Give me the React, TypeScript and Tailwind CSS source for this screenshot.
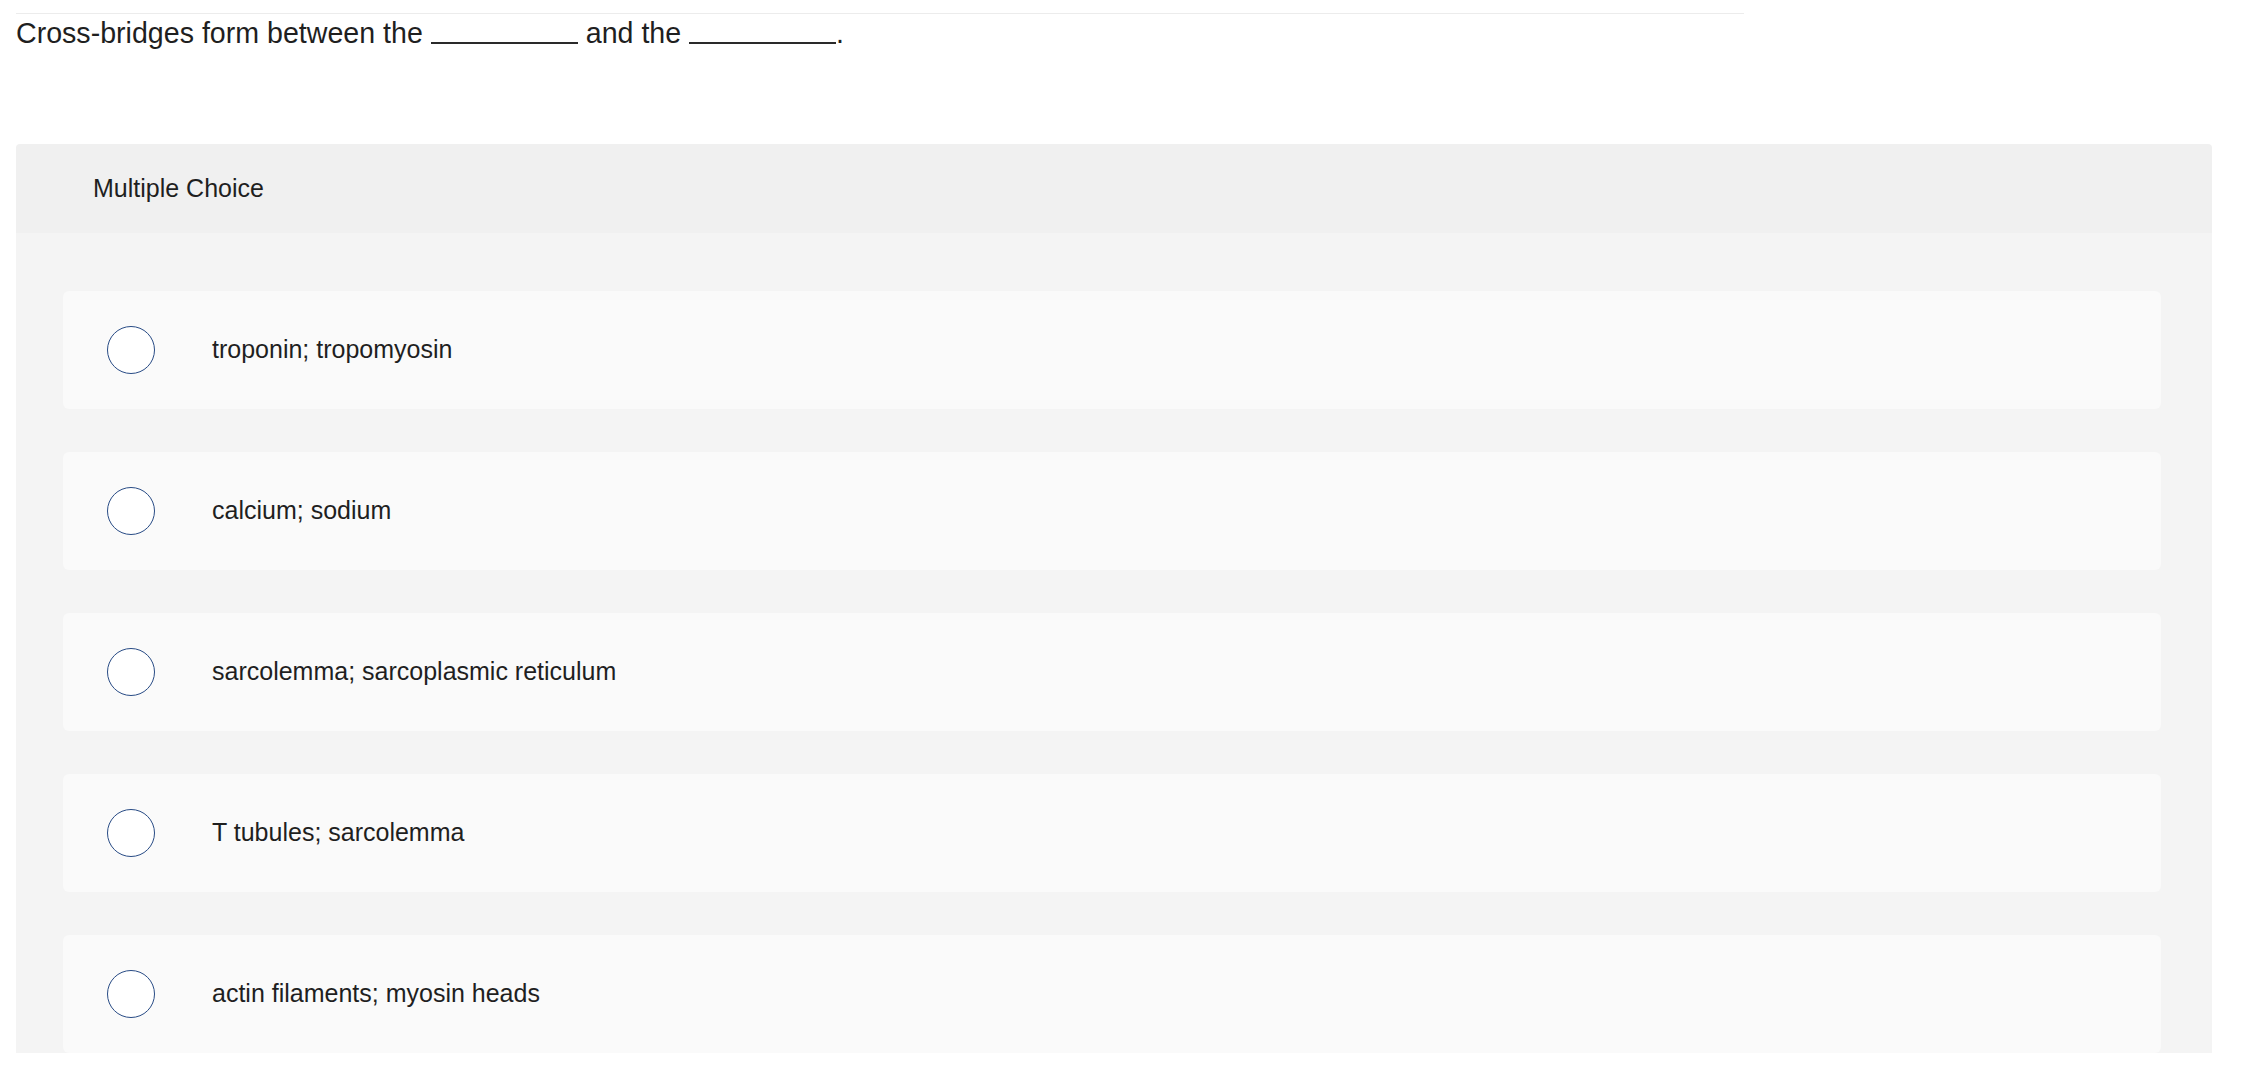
const options = [
  'troponin; tropomyosin',
  'calcium; sodium',
  'sarcolemma; sarcoplasmic reticulum',
  'T tubules; sarcolemma',
  'actin filaments; myosin heads',
];

function Blank() {
  return <span className="inline-block w-[147px] h-[28px] border-b-2 border-[#2a2a2a] align-baseline translate-y-[1px]" />;
}

function Option({ label }: { label: string }) {
  return (
    <div className="flex items-center h-[118px] w-full rounded-[6px] bg-[#fafafa] pl-[44px]">
      <span className="w-[48px] h-[48px] rounded-full border border-[#284b85] bg-white shrink-0" />
      <span className="ml-[57px] text-[25px] text-[#1f1f1f]">{label}</span>
    </div>
  );
}

export default function App() {
  return (
    <div className="h-[1078px] overflow-hidden bg-white px-[16px] font-['Liberation_Sans',Arial,sans-serif]">
      <div className="w-[1728px] mt-[13px] border-t border-[#ececec]" />
      <p className="pt-[1px] text-[28.6px] leading-[34px] text-[#1f1f1f]">
        Cross-bridges form between the <Blank /> and the <Blank />.
      </p>

      <section className="mt-[94px] w-[2196px] rounded-t-[4px] overflow-hidden">
        <div className="flex items-center h-[89px] pl-[77px] bg-[#f0f0f0]">
          <span className="text-[25px] text-[#1f1f1f]">Multiple Choice</span>
        </div>
        <div className="flex flex-col gap-[43px] bg-[#f4f4f4] pt-[58px] pl-[47px] pr-[51px]">
          {options.map((o) => (
            <Option key={o} label={o} />
          ))}
        </div>
      </section>
    </div>
  );
}
